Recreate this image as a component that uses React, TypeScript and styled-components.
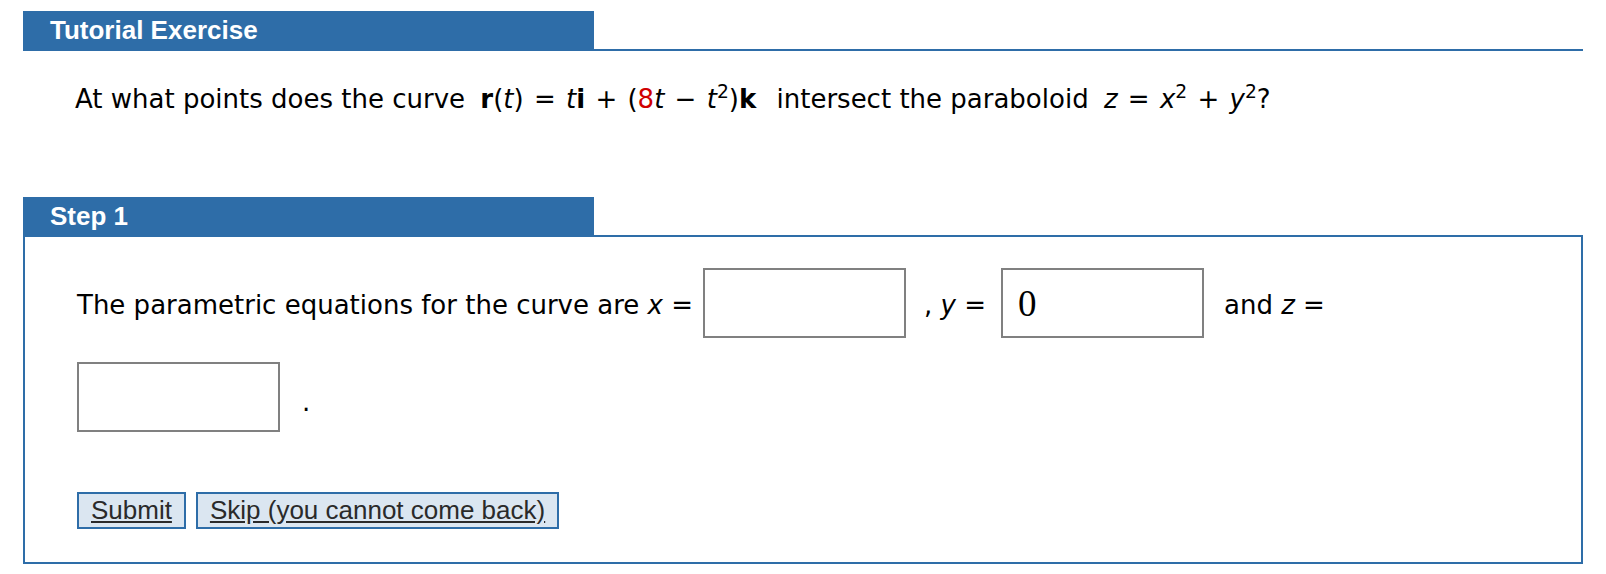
import React from 'react';
import styled, { createGlobalStyle } from 'styled-components';

const BLUE = '#2e6da8';

const GlobalStyle = createGlobalStyle`
  body {
    margin: 0;
    background: #fff;
    color: #000;
    font-family: "DejaVu Sans", Verdana, sans-serif;
  }
`;

const Page = styled.div`
  width: 1560px;
  padding: 11px 0 0 23px;
`;

const SectionHeader = styled.div`
  display: flex;
  border-bottom: 2px solid ${BLUE};
`;

const Tab = styled.div`
  box-sizing: border-box;
  width: 571px;
  height: 38px;
  padding-left: 27px;
  background: ${BLUE};
  color: #fff;
  font: bold 26px/38px "Liberation Sans", Arial, sans-serif;
`;

const Question = styled.p`
  margin: 30px 0 0 52px;
  font-size: 26px;
  line-height: 36px;
  white-space: nowrap;
`;

const Expr = styled.span<{ $left?: number; $right?: number }>`
  margin-left: ${p => p.$left ?? 7}px;
  margin-right: ${p => p.$right ?? 7}px;
`;

// operators in the formulas sit a little wider apart than plain spaces
const Op = styled.span`
  margin: 0 2px;
`;

const B = styled.b`
  font-weight: bold;
`;

const I = styled.i`
  font-style: italic;
`;

const Red = styled.span`
  color: #d00000;
`;

const Sup = styled.sup`
  font-size: 0.72em;
  line-height: 0;
  vertical-align: 0.55em;
`;

const StepSection = styled.section`
  margin-top: 80px;
`;

const StepBody = styled.div`
  border: 2px solid ${BLUE};
  border-top: none;
  padding: 31px 0 33px 52px;
`;

const Row = styled.div<{ $top?: number }>`
  display: flex;
  align-items: center;
  margin-top: ${p => p.$top ?? 0}px;
  font-size: 26px;
  white-space: pre;
`;

const Label = styled.span<{ $left?: number; $right?: number; $drop?: number }>`
  margin-left: ${p => p.$left ?? 0}px;
  margin-right: ${p => p.$right ?? 0}px;
  padding-top: ${p => p.$drop ?? 3}px;
`;

const AnswerInput = styled.input`
  box-sizing: border-box;
  width: 203px;
  height: 70px;
  padding: 0 0 0 15px;
  border: 2px solid #808080;
  border-radius: 0;
  background: #fff;
  color: #000;
  font: 37px "Liberation Serif", "Times New Roman", serif;
  outline: none;
`;

const Buttons = styled.div`
  display: flex;
  gap: 10px;
  margin-top: 60px;
`;

const Button = styled.button`
  box-sizing: border-box;
  height: 37px;
  padding: 0 12px;
  border: 2px solid ${BLUE};
  border-radius: 0;
  background: #dbe6f1;
  color: #2a2a2a;
  font: 26px/33px "Liberation Sans", Arial, sans-serif;
  text-decoration: underline;
  cursor: pointer;
`;

export default function App() {
  return (
    <Page>
      <GlobalStyle />
      <SectionHeader>
        <Tab>Tutorial Exercise</Tab>
      </SectionHeader>
      <Question>
        At what points does the curve{' '}
        <Expr $left={7} $right={12}>
          <B>r</B>(<I>t</I>) <Op>=</Op> <I>t</I>
          <B>i</B> <Op>+</Op> (<Red>8</Red>
          <I>t</I> <Op>−</Op> <I>t</I>
          <Sup>2</Sup>)<B>k</B>
        </Expr>{' '}
        intersect the paraboloid{' '}
        <Expr $left={7} $right={0}>
          <I>z</I> <Op>=</Op> <I>x</I>
          <Sup>2</Sup> <Op>+</Op> <I>y</I>
          <Sup>2</Sup>?
        </Expr>
      </Question>

      <StepSection>
        <SectionHeader>
          <Tab>Step 1</Tab>
        </SectionHeader>
        <StepBody>
          <Row>
            <Label $right={10}>
              The parametric equations for the curve are <I>x</I> =
            </Label>
            <AnswerInput />
            <Label $left={18} $right={15}>
              , <I>y</I> =
            </Label>
            <AnswerInput defaultValue="0" />
            <Label $left={20}>
              and <I>z</I> =
            </Label>
          </Row>
          <Row $top={24}>
            <AnswerInput />
            <Label $left={22} $drop={10}>
              .
            </Label>
          </Row>
          <Buttons>
            <Button>Submit</Button>
            <Button>Skip (you cannot come back)</Button>
          </Buttons>
        </StepBody>
      </StepSection>
    </Page>
  );
}
